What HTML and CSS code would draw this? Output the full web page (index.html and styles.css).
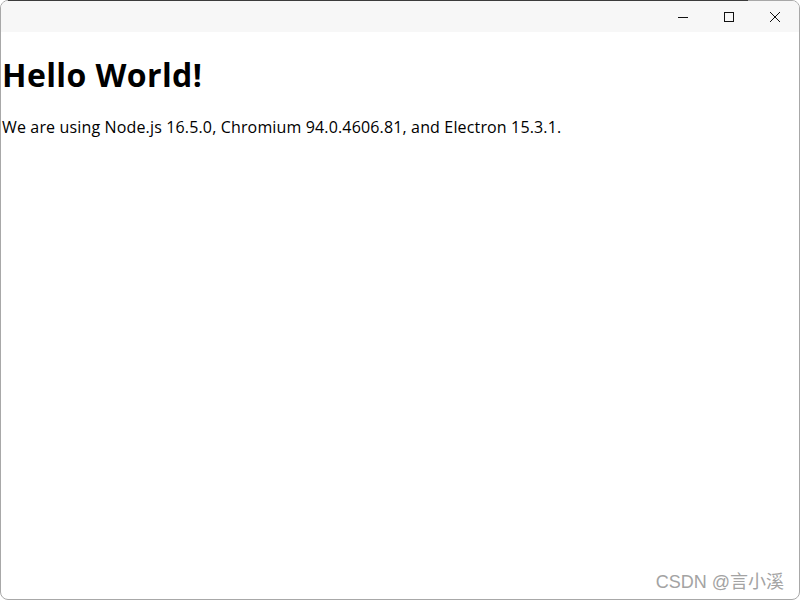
FILE: index.html
```html
<!DOCTYPE html>
<html>
<head>
<meta charset="utf-8">
<link rel="stylesheet" href="styles.css">
</head>
<body>
<div class="topline"></div>
<div class="window">
  <div class="titlebar">
    <div class="ctrl">
      <svg width="12" height="12" viewBox="0 0 12 12"><path d="M1 6.5H11" stroke="#111" stroke-width="1"/></svg>
    </div>
    <div class="ctrl">
      <svg width="12" height="12" viewBox="0 0 12 12"><rect x="1.5" y="1.5" width="9" height="9" fill="none" stroke="#111" stroke-width="1"/></svg>
    </div>
    <div class="ctrl">
      <svg width="12" height="12" viewBox="0 0 12 12"><path d="M1 1L11 11M11 1L1 11" stroke="#111" stroke-width="1"/></svg>
    </div>
  </div>
  <div class="content">
    <h1 class="title">Hello World!</h1>
    <p class="info">We are using Node.js 16.5.0, Chromium 94.0.4606.81, and Electron 15.3.1.</p>
  </div>
  <div class="watermark">CSDN @言小溪</div>
</div>
</body>
</html>
```
FILE: styles.css
```css
html, body {
  margin: 0;
  padding: 0;
  width: 800px;
  height: 600px;
  background: #ffffff;
  overflow: hidden;
}
body {
  position: relative;
  font-family: "Open Sans", "Noto Sans", sans-serif;
}
.topline {
  position: absolute;
  left: 8px;
  top: 0;
  width: 740px;
  height: 1px;
  background: #3c3c3c;
  z-index: 2;
}
.window {
  position: relative;
  box-sizing: border-box;
  width: 800px;
  height: 600px;
  border: 1px solid #a8a8a8;
  border-radius: 8px;
  overflow: hidden;
  display: flex;
  flex-direction: column;
  background: #fff;
}
.titlebar {
  height: 31px;
  flex: none;
  background: #f7f7f7;
  display: flex;
  justify-content: flex-end;
  align-items: center;
  padding-right: 1px;
}
.ctrl {
  width: 46px;
  height: 31px;
  display: flex;
  align-items: center;
  justify-content: center;
}
.content {
  flex: 1;
  padding: 0 1px;
}
.title {
  margin: 21px 0;
  font-size: 32px;
  font-weight: 700;
  color: #000;
  line-height: 43px;
  letter-spacing: 0.4px;
}
.info {
  margin: 0;
  font-size: 16px;
  color: #000;
  line-height: 21px;
  letter-spacing: 0.15px;
}
.watermark {
  position: absolute;
  right: 15px;
  bottom: 6px;
  font-family: "Liberation Sans", "Noto Sans CJK SC", sans-serif;
  font-size: 18px;
  color: #a3a3a3;
}
```
